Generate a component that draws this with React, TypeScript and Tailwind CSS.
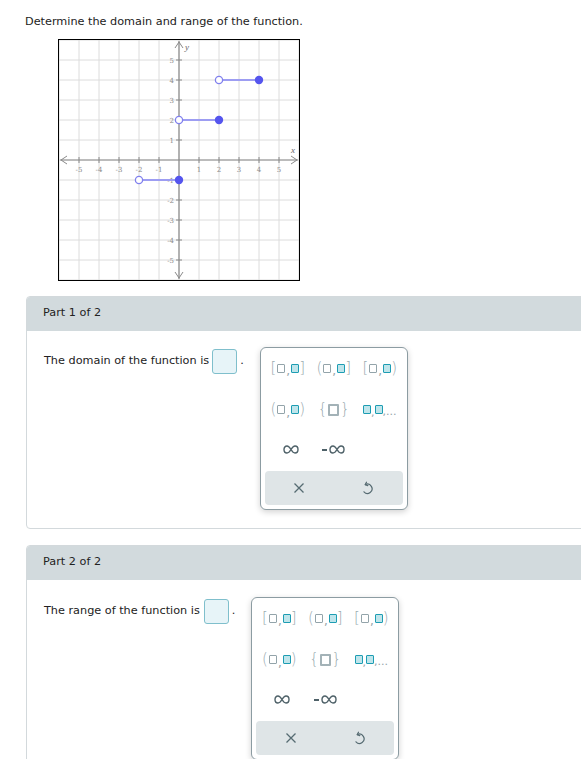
import React from "react";

const G = 20;
const C = 120;

function Graph() {
  const ticks = [-5, -4, -3, -2, -1, 1, 2, 3, 4, 5];
  const lines = [];
  for (let i = 0; i <= 12; i++) lines.push(i * G);
  const px = (x: number) => C + x * G;
  const py = (y: number) => C - y * G;
  const segs = [
    [-2, 0, -1],
    [0, 2, 2],
    [2, 4, 4],
  ];
  return (
    <div className="ml-[58px] mt-[8px] w-[242px] h-[242px] border border-black">
      <svg width="240" height="240" viewBox="0 0 240 240" style={{ display: "block" }}>
        {lines.map((v) => (
          <line key={"v" + v} x1={v} y1={0} x2={v} y2={240} stroke="#dcdcdc" strokeWidth="1" />
        ))}
        {lines.map((v) => (
          <line key={"h" + v} x1={0} y1={v} x2={240} y2={v} stroke="#dcdcdc" strokeWidth="1" />
        ))}
        <line x1={1} y1={C} x2={239} y2={C} stroke="#8a8a8a" strokeWidth="1.2" />
        <line x1={C} y1={1} x2={C} y2={239} stroke="#8a8a8a" strokeWidth="1.2" />
        <polyline points="8,116 2,120 8,124" fill="none" stroke="#8a8a8a" strokeWidth="1" />
        <polyline points="232,116 238,120 232,124" fill="none" stroke="#8a8a8a" strokeWidth="1" />
        <polyline points="116,8 120,2 124,8" fill="none" stroke="#8a8a8a" strokeWidth="1" />
        <polyline points="116,232 120,238 124,232" fill="none" stroke="#8a8a8a" strokeWidth="1" />
        {ticks.map((t) => (
          <line key={"tx" + t} x1={px(t)} y1={C - 3} x2={px(t)} y2={C + 3} stroke="#8a8a8a" strokeWidth="1" />
        ))}
        {ticks.map((t) => (
          <line key={"ty" + t} x1={C - 3} y1={py(t)} x2={C + 3} y2={py(t)} stroke="#8a8a8a" strokeWidth="1" />
        ))}
        {ticks.map((t) => (
          <text key={"lx" + t} x={px(t)} y={C + 12} fontSize="7" fill="#8a8a8a" textAnchor="middle" fontFamily="'DejaVu Serif', serif">
            {t}
          </text>
        ))}
        {ticks.map((t) => (
          <text key={"ly" + t} x={C - 5} y={py(t) + 2.5} fontSize="7" fill="#8a8a8a" textAnchor="end" fontFamily="'DejaVu Serif', serif">
            {t}
          </text>
        ))}
        <text x={232} y={113} fontSize="9" fill="#666" fontStyle="italic" fontFamily="'Liberation Serif', serif">x</text>
        <text x={126} y={10} fontSize="9" fill="#666" fontStyle="italic" fontFamily="'Liberation Serif', serif">y</text>
        {segs.map(([a, b, y]) => (
          <g key={"s" + a}>
            <line x1={px(a)} y1={py(y)} x2={px(b)} y2={py(y)} stroke="#9d9df2" strokeWidth="2" />
            <circle cx={px(a)} cy={py(y)} r="3.6" fill="#fff" stroke="#8181ee" strokeWidth="1.3" />
            <circle cx={px(b)} cy={py(y)} r="4.2" fill="#5555ee" />
          </g>
        ))}
      </svg>
    </div>
  );
}

const GrayBox = ({ className = "" }: { className?: string }) => (
  <span className={"inline-block w-[8px] h-[9px] border-[1.5px] border-[#93a4aa] rounded-[1px] " + className} />
);
const TealBox = ({ className = "" }: { className?: string }) => (
  <span className={"inline-block w-[8px] h-[9px] border-[1.5px] border-[#1d9db3] bg-[#bfe5eb] rounded-[1px] " + className} />
);

function Br({ c }: { c: string }) {
  return <span className="text-[15px] leading-none text-[#9aabb0] font-extralight font-['DejaVu_Sans',sans-serif]">{c}</span>;
}

function Inf() {
  return (
    <svg width="16" height="9" viewBox="0 0 16 9">
      <path
        d="M8 4.5 C6.5 2 5.5 1 4 1 C2.2 1 1 2.6 1 4.5 C1 6.4 2.2 8 4 8 C5.5 8 6.5 7 8 4.5 C9.5 2 10.5 1 12 1 C13.8 1 15 2.6 15 4.5 C15 6.4 13.8 8 12 8 C10.5 8 9.5 7 8 4.5 Z"
        fill="none"
        stroke="#4e6168"
        strokeWidth="1.4"
      />
    </svg>
  );
}

function Interval({ l, r }: { l: string; r: string }) {
  return (
    <span className="flex items-center">
      <Br c={l} />
      <GrayBox className="ml-[1px]" />
      <span className="text-[12px] leading-none text-[#93a4aa] mt-[6px] mx-[1px]">,</span>
      <TealBox />
      <Br c={r} />
    </span>
  );
}

function Keypad() {
  return (
    <div className="w-[148px] h-[163px] bg-white border border-[#8c9ca2] rounded-[6px] shadow-[0_2px_6px_rgba(0,0,0,0.18)] flex flex-col px-[4px] pb-[4px]">
      <div className="grid grid-cols-3 h-[41px] items-center justify-items-center">
        <Interval l="[" r="]" />
        <Interval l="(" r="]" />
        <Interval l="[" r=")" />
      </div>
      <div className="grid grid-cols-3 h-[42px] items-center justify-items-center">
        <Interval l="(" r=")" />
        <span className="flex items-center">
          <Br c="{" />
          <span className="inline-block w-[11px] h-[12px] border-[2px] border-[#a3b2b7] rounded-[1px] mx-[1px]" />
          <Br c="}" />
        </span>
        <span className="flex items-center">
          <TealBox />
          <span className="text-[11px] leading-none text-[#93a4aa] mt-[5px]">,</span>
          <TealBox />
          <span className="text-[11px] leading-none text-[#93a4aa] mt-[3px]">,...</span>
        </span>
      </div>
      <div className="grid grid-cols-3 h-[38px] items-center justify-items-center">
        <span className="ml-[6px] flex items-center"><Inf /></span>
        <span className="flex items-center">
          <span className="inline-block w-[5px] h-[1.5px] bg-[#4e6168] mr-[2px]" />
          <Inf />
        </span>
        <span />
      </div>
      <div className="mt-auto h-[34px] bg-[#dfe5e7] rounded-[4px] grid grid-cols-2 items-center justify-items-center">
        <svg width="12" height="12" viewBox="0 0 12 12">
          <path d="M1.5 1.5 L10.5 10.5 M10.5 1.5 L1.5 10.5" stroke="#566b72" strokeWidth="1.3" fill="none" />
        </svg>
        <svg width="12" height="14" viewBox="0 0 12 14">
          <path d="M4.5 1.2 L3.2 3.6 L5.8 4.6" stroke="#566b72" strokeWidth="1.2" fill="none" strokeLinejoin="round" strokeLinecap="round" />
          <path d="M3.4 3.6 A4.6 4.6 0 1 1 2 10.8" stroke="#566b72" strokeWidth="1.2" fill="none" strokeLinecap="round" />
        </svg>
      </div>
    </div>
  );
}

function Part({ n, label, padTop, gap }: { n: number; label: string; padTop: string; gap: string }) {
  return (
    <div className="ml-[26px] w-[600px] border border-[#d3d9dc] rounded-[4px] overflow-hidden">
      <div className="h-[34px] bg-[#d2dadd] flex items-center pl-[16px] text-[11.25px] text-[#222]">Part {n} of 2</div>
      <div className={"flex items-start pl-[17px] pb-[18px] " + padTop}>
        <div className="flex items-center mt-[2px]">
          <span className="text-[11.25px] text-[#222]">{label}</span>
          <span className={"w-[25px] h-[25px] bg-[#e7f4f8] border border-[#7fbfcc] rounded-[3px] " + gap} />
          <span className="text-[11.25px] ml-[3px] mr-[16px]">.</span>
        </div>
        <Keypad />
      </div>
    </div>
  );
}

export default function App() {
  return (
    <div className="w-[581px] h-[759px] overflow-hidden bg-white font-['DejaVu_Sans',sans-serif] text-[#222]">
      <div className="pt-[14px] pl-[25px] text-[11.25px]">Determine the domain and range of the function.</div>
      <Graph />
      <div className="mt-[15px]">
        <Part n={1} label="The domain of the function is" padTop="pt-[16px]" gap="ml-[3px]" />
      </div>
      <div className="mt-[16px]">
        <Part n={2} label="The range of the function is" padTop="pt-[17px]" gap="ml-[4px]" />
      </div>
    </div>
  );
}
